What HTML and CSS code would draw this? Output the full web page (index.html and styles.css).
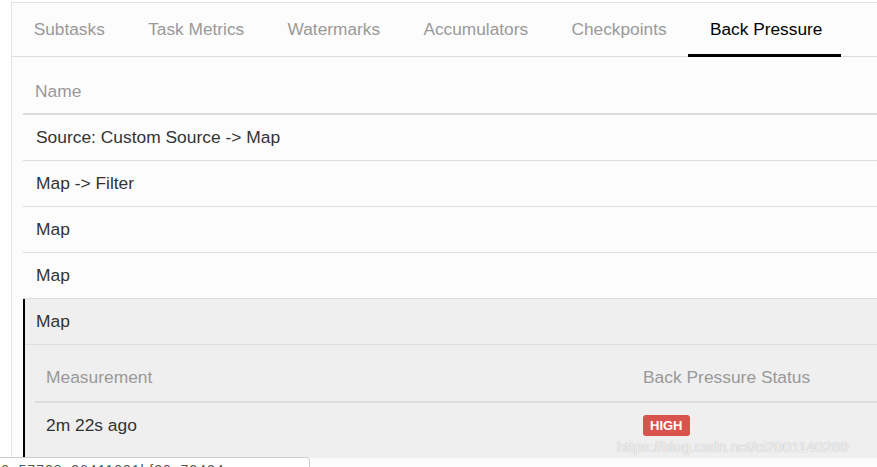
FILE: index.html
```html
<!DOCTYPE html>
<html>
<head>
<meta charset="utf-8">
<link rel="stylesheet" href="styles.css">
</head>
<body>
<div class="page">
  <div class="card">
    <div class="tabs">
      <div class="tab">Subtasks</div>
      <div class="tab">Task Metrics</div>
      <div class="tab">Watermarks</div>
      <div class="tab">Accumulators</div>
      <div class="tab">Checkpoints</div>
      <div class="tab active">Back Pressure</div>
    </div>
    <div class="table">
      <div class="thead">Name</div>
      <div class="row">Source: Custom Source -&gt; Map</div>
      <div class="row">Map -&gt; Filter</div>
      <div class="row">Map</div>
      <div class="row">Map</div>
      <div class="expanded">
        <div class="row open">Map</div>
        <div class="detail">
          <div class="subtable">
            <div class="sub-th">Measurement</div>
            <div class="sub-th">Back Pressure Status</div>
            <div class="sub-td">2m 22s ago</div>
            <div class="sub-td"><span class="badge">HIGH</span></div>
          </div>
        </div>
      </div>
    </div>
  </div>
</div>
<div class="tooltip">6_57728_26411031bf20_72424</div>
<div class="watermark">https://blog.csdn.net/ci2001140269</div>
</body>
</html>
```

FILE: styles.css
```css
html, body {
  margin: 0;
  padding: 0;
  background: #ffffff;
  overflow: hidden;
  font-family: "Liberation Sans", Arial, sans-serif;
  width: 877px;
  height: 467px;
  position: relative;
}

.page {
  padding-top: 2px;
  padding-left: 11px;
}

.card {
  width: 1100px;
  height: 520px;
  border-top: 1px solid #e4e4e4;
  border-left: 1px solid #e4e4e4;
  background: #fcfcfc;
}

.tabs {
  display: flex;
  height: 53px;
  border-bottom: 1px solid #dddddd;
}

.tab {
  display: flex;
  align-items: center;
  padding: 1px 21.7px 0;
  font-size: 17.3px;
  color: #999999;
  margin-bottom: -1px;
  border-bottom: 3px solid transparent;
  box-sizing: border-box;
}

.tab.active {
  color: #000000;
  border-bottom-color: #000000;
  padding-right: 19px;
}

.table {
  margin-left: 11px;
}

.thead {
  box-sizing: border-box;
  padding: 23px 0 0 12px;
  line-height: 22px;
  font-size: 17.4px;
  color: #999999;
  border-bottom: 2px solid #dddddd;
  height: 58px;
}

.row {
  height: 45px;
  line-height: 45px;
  padding-left: 13px;
  font-size: 17.4px;
  color: #333333;
  border-bottom: 1px solid #dddddd;
}

.expanded {
  border-left: 2px solid #000000;
  background: #efefef;
}

.row.open {
  padding-left: 11px;
}

.detail {
  padding: 0 0 10px 10px;
}

.subtable {
  display: grid;
  grid-template-columns: 597px 1fr;
}

.sub-th {
  height: 58px;
  box-sizing: border-box;
  padding: 21px 0 0 11px;
  line-height: 22px;
  font-size: 17.4px;
  color: #999999;
  border-bottom: 2px solid #dddddd;
}

.sub-td {
  height: 45px;
  line-height: 45px;
  padding-left: 11px;
  font-size: 17.4px;
  color: #333333;
}

.badge {
  display: inline-block;
  background: #d9534f;
  color: #ffffff;
  font-weight: bold;
  font-size: 13px;
  line-height: 13px;
  padding: 4px 7px;
  border-radius: 3px;
  vertical-align: 1px;
}

.tooltip {
  position: absolute;
  left: -12px;
  top: 457px;
  width: 322px;
  height: 30px;
  background: #ffffff;
  border: 1px solid #cccccc;
  border-radius: 4px;
  box-sizing: border-box;
  padding: 4px 0 0 12px;
  font-size: 14px;
  color: #555555;
  letter-spacing: 1px;
}

.watermark {
  position: absolute;
  left: 617px;
  top: 438px;
  font-size: 15px;
  color: rgba(255, 255, 255, 0.85);
  text-shadow: 0 0 1px rgba(0, 0, 0, 0.35);
}
```
